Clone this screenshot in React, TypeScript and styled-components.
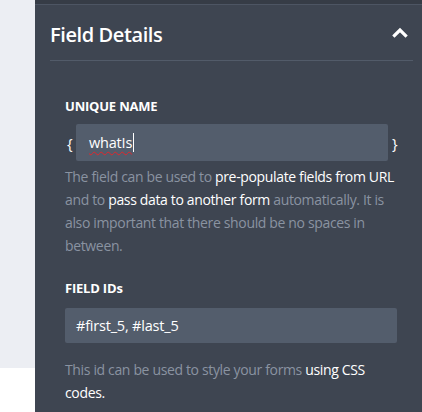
import React from "react";
import styled, { createGlobalStyle } from "styled-components";

const GlobalStyle = createGlobalStyle`
  html, body {
    margin: 0;
    padding: 0;
    background: #ffffff;
  }
  * {
    box-sizing: border-box;
  }
`;

const Page = styled.div`
  display: flex;
  width: 422px;
  height: 412px;
  overflow: hidden;
  font-family: "Open Sans", "Noto Sans", sans-serif;
`;

const Backdrop = styled.div`
  width: 35px;
  height: 368px;
  background: #eceef3;
  flex-shrink: 0;
`;

const Panel = styled.section`
  flex: 1;
  background: #3e4551;
  display: flex;
  flex-direction: column;
`;

const TopEdge = styled.div`
  height: 5px;
  background: #363c46;
  border-bottom: 1px solid #4d5563;
`;

const Header = styled.header`
  display: flex;
  align-items: center;
  justify-content: space-between;
  margin: 0 9px 0 15px;
  padding: 16px 0 12px;
  border-bottom: 1px solid #525b69;
`;

const Title = styled.h2`
  margin: 0;
  color: #ffffff;
  font-size: 20px;
  font-weight: 600;
  letter-spacing: -0.4px;
  line-height: 27px;
`;

const Toggle = styled.button`
  display: flex;
  align-items: center;
  justify-content: center;
  width: 24px;
  height: 24px;
  margin: -6px 1px 0 0;
  padding: 0;
  border: none;
  background: transparent;
  cursor: pointer;
`;

const Body = styled.div`
  padding: 36px 20px 0 30px;
`;

const Group = styled.div<{ $gap?: number }>`
  margin-bottom: ${({ $gap }) => $gap ?? 0}px;
`;

const Label = styled.div<{ $space: number }>`
  color: #ffffff;
  font-size: 13px;
  font-weight: 700;
  letter-spacing: -0.2px;
  line-height: 18px;
  margin-bottom: ${({ $space }) => $space}px;
`;

const NameRow = styled.div`
  display: flex;
  align-items: center;
  margin-right: 4px;
`;

const Brace = styled.span<{ $pad: number; $width: number }>`
  color: #ffffff;
  font-size: 15px;
  width: ${({ $width }) => $width}px;
  padding-left: ${({ $pad }) => $pad}px;
  flex-shrink: 0;
`;

const Input = styled.div<{ $height: number; $indent: number }>`
  flex: 1;
  display: flex;
  align-items: center;
  height: ${({ $height }) => $height}px;
  padding-left: ${({ $indent }) => $indent}px;
  background: #535d6c;
  border-radius: 2px;
  color: #ffffff;
  font-size: 14.5px;
  letter-spacing: -0.2px;
`;

const IdInput = styled(Input)`
  margin-right: 5px;
`;

const Misspelled = styled.span`
  text-decoration: underline wavy #e0262b;
  text-decoration-thickness: 1px;
  text-underline-offset: 3px;
`;

const Caret = styled.span`
  display: inline-block;
  width: 1px;
  height: 19px;
  margin-left: 1px;
  background: #ffffff;
`;

const Help = styled.p<{ $top: number }>`
  margin: ${({ $top }) => $top}px 0 0;
  color: #8a93a1;
  font-size: 14px;
  letter-spacing: -0.35px;
  line-height: 23px;
`;

const Strong = styled.span`
  color: #ffffff;
`;

const ChevronUp = () => (
  <svg width="16" height="12" viewBox="0 0 16 12">
    <path
      d="M2.5 9.5 L8 4 L13.5 9.5"
      fill="none"
      stroke="#ffffff"
      strokeWidth="3.2"
      strokeLinecap="square"
    />
  </svg>
);

export default function App() {
  return (
    <>
      <GlobalStyle />
      <Page>
        <Backdrop />
        <Panel>
          <TopEdge />
          <Header>
            <Title>Field Details</Title>
            <Toggle type="button" aria-label="Collapse">
              <ChevronUp />
            </Toggle>
          </Header>
          <Body>
            <Group $gap={22}>
              <Label $space={9}>UNIQUE NAME</Label>
              <NameRow>
                <Brace $width={11} $pad={2}>{"{"}</Brace>
                <Input $height={37} $indent={13}>
                  <Misspelled>whatIs</Misspelled>
                  <Caret />
                </Input>
                <Brace $width={10} $pad={4}>{"}"}</Brace>
              </NameRow>
              <Help $top={4}>
                The field can be used to <Strong>pre-populate fields from URL</Strong> and
                to <Strong>pass data to another form</Strong> automatically. It is also
                important that there should be no spaces in between.
              </Help>
            </Group>
            <Group>
              <Label $space={11}>FIELD IDs</Label>
              <IdInput $height={35} $indent={11}>
                #first_5, #last_5
              </IdInput>
              <Help $top={15}>
                This id can be used to style your forms <Strong>using CSS codes.</Strong>
              </Help>
            </Group>
          </Body>
        </Panel>
      </Page>
    </>
  );
}
